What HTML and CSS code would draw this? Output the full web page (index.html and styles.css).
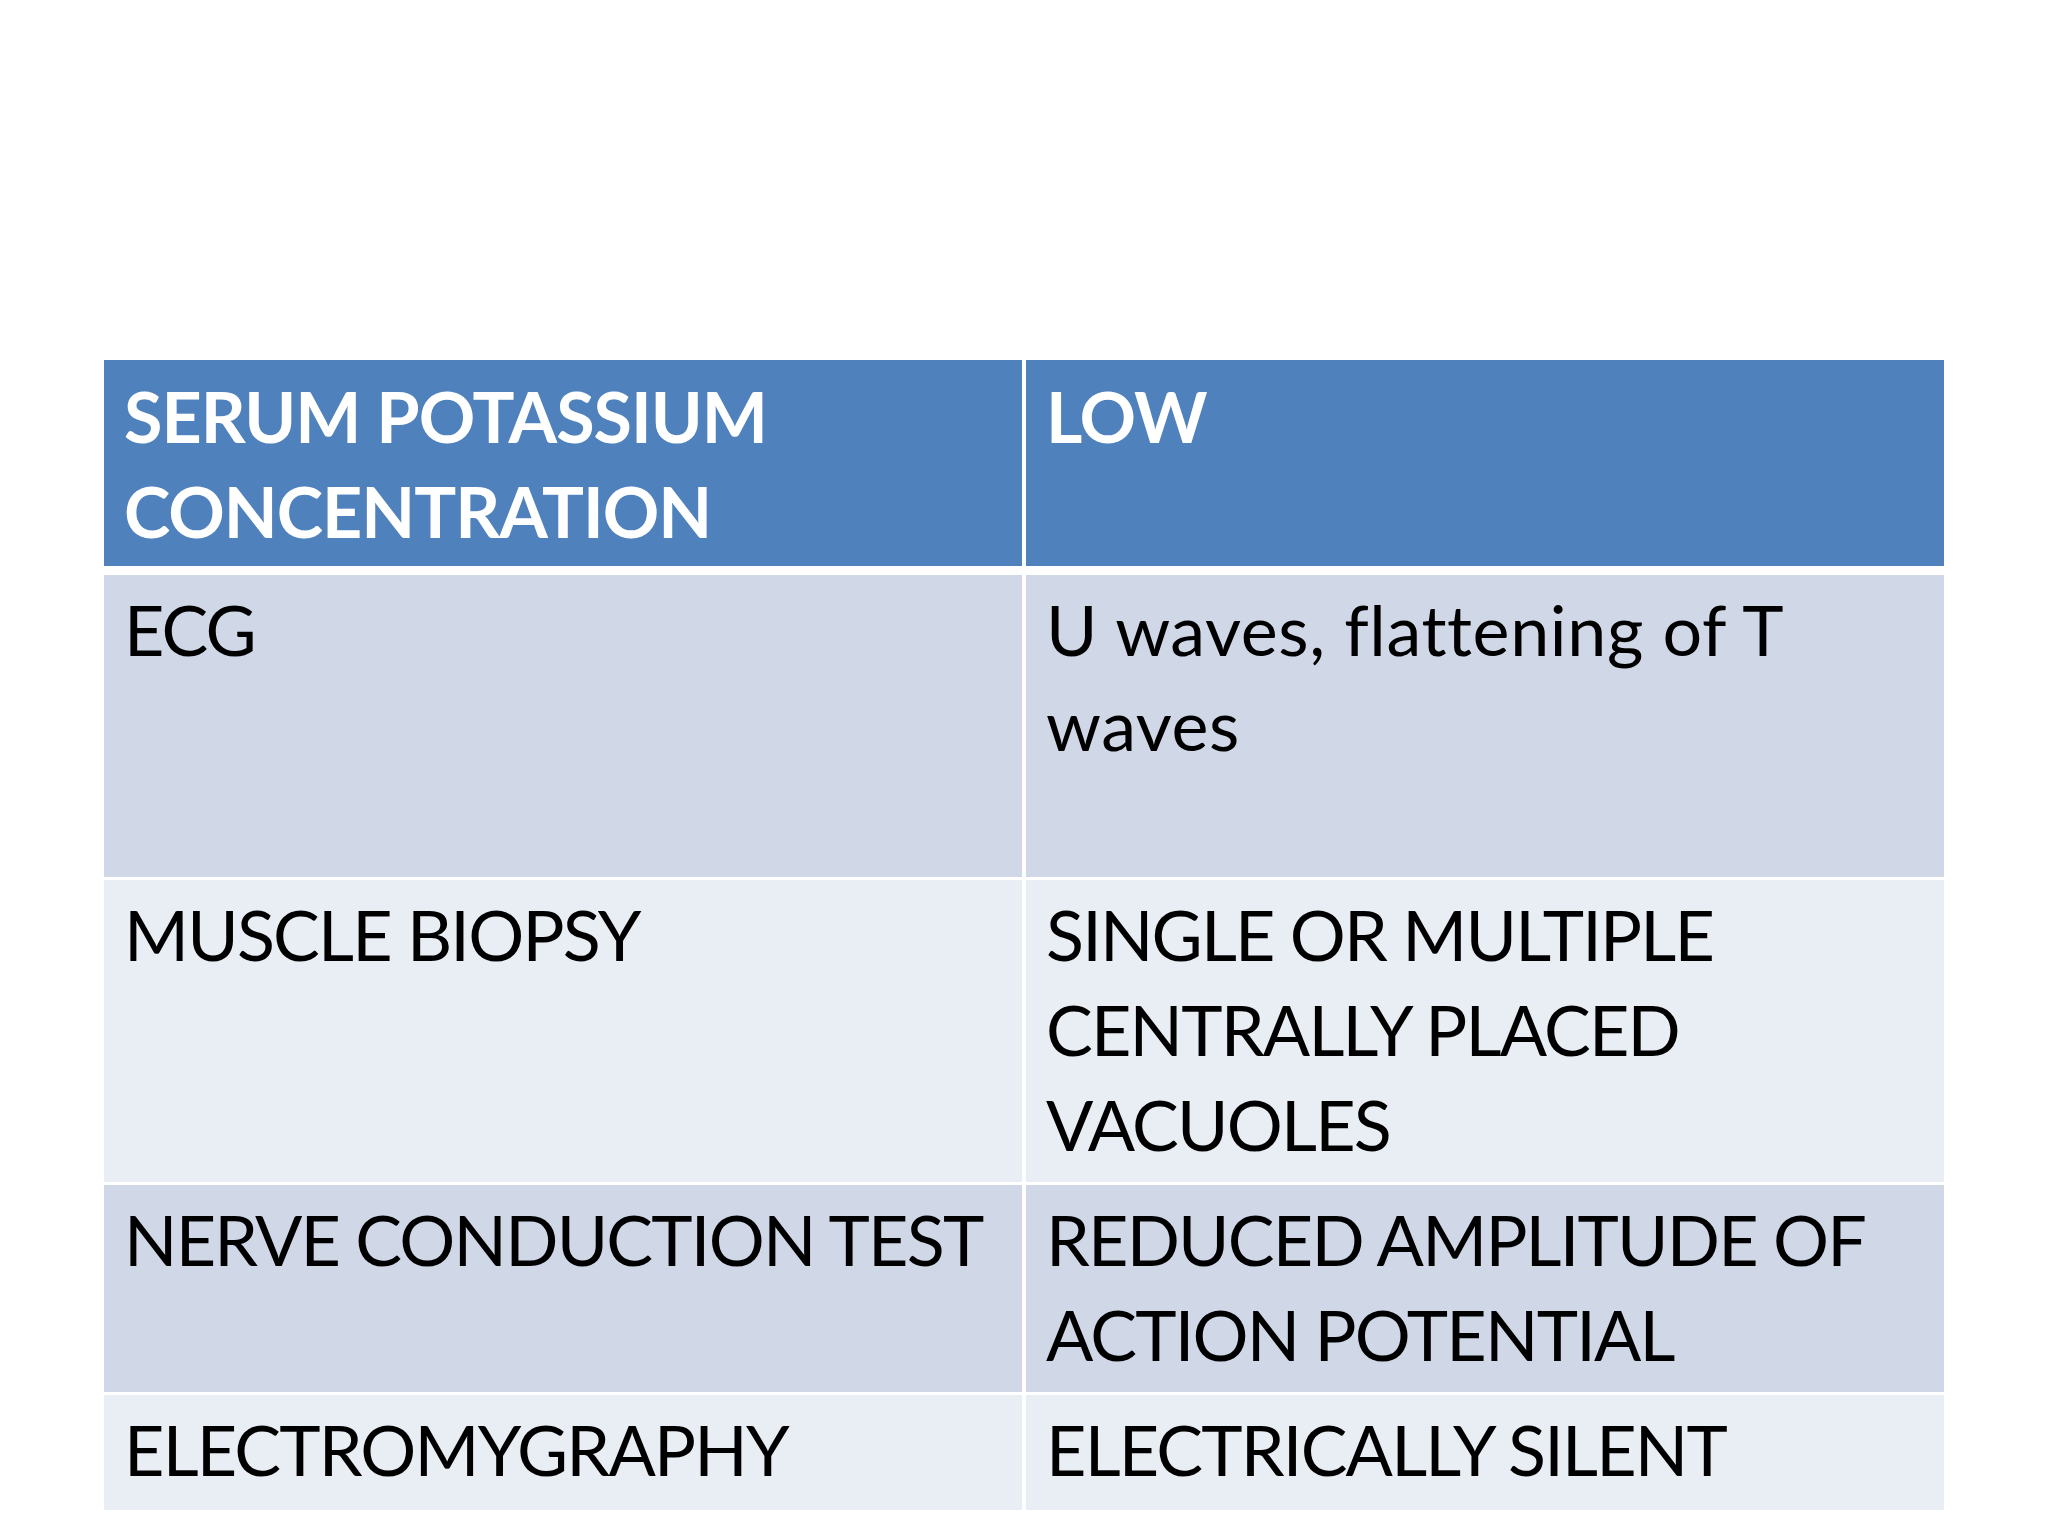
FILE: index.html
```html
<!DOCTYPE html>
<html lang="en">
<head>
<meta charset="utf-8">
<title>Serum Potassium</title>
<link rel="stylesheet" href="styles.css">
</head>
<body>
<div class="slide">
  <div class="table">
    <div class="cell head"><p>SERUM POTASSIUM CONCENTRATION</p></div>
    <div class="cell head"><p>LOW</p></div>

    <div class="cell dark"><p>ECG</p></div>
    <div class="cell dark"><p class="lower">U waves, flattening of T waves</p><p class="empty"></p></div>

    <div class="cell light"><p>MUSCLE BIOPSY</p></div>
    <div class="cell light"><p>SINGLE OR MULTIPLE CENTRALLY PLACED VACUOLES</p></div>

    <div class="cell dark"><p>NERVE CONDUCTION TEST</p></div>
    <div class="cell dark"><p>REDUCED AMPLITUDE OF ACTION POTENTIAL</p></div>

    <div class="cell light last"><p>ELECTROMYGRAPHY</p></div>
    <div class="cell light last"><p>ELECTRICALLY SILENT</p></div>
  </div>
</div>
</body>
</html>
```

FILE: styles.css
```css
html, body {
  margin: 0;
  padding: 0;
  background: #ffffff;
}

.slide {
  width: 2048px;
  height: 1536px;
  box-sizing: border-box;
  padding: 360px 0 0 104px;
  overflow: hidden;
}

.table {
  width: 1840px;
  display: grid;
  grid-template-columns: 918px 918px;
  column-gap: 4px;
  row-gap: 3px;
  font-family: Lato, "Open Sans", "Liberation Sans", sans-serif;
  font-size: 70px;
  line-height: 95px;
  letter-spacing: -1.8px;
  color: #000000;
}

.cell {
  padding: 7px 20px 10px 20px;
}

.cell p {
  margin: 0;
}

.cell .empty {
  height: 95px;
}

.cell .lower {
  letter-spacing: 0.6px;
}

.last {
  padding-bottom: 13px;
}

.head {
  background: #4f81bd;
  color: #ffffff;
  font-weight: 700;
  letter-spacing: -1px;
  padding: 9px 20px 7px 20px;
  margin-bottom: 6px;
}

.dark {
  background: #d0d8e8;
}

.light {
  background: #e9edf4;
}
```
